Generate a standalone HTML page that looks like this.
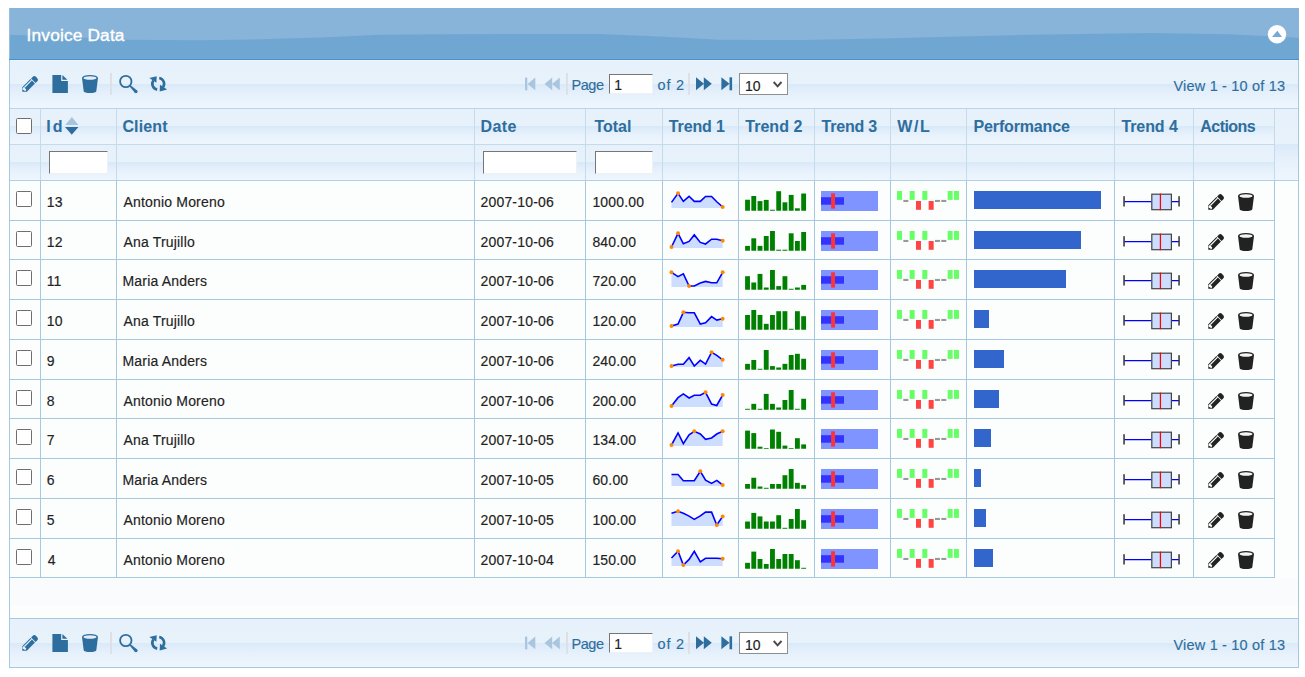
<!DOCTYPE html><html><head><meta charset="utf-8"><style>
*{box-sizing:border-box;margin:0;padding:0}
html,body{width:1305px;height:677px;background:#fff;overflow:hidden;font-family:"Liberation Sans", sans-serif;position:relative}
.a{position:absolute}
.t{position:absolute;white-space:nowrap;font-family:"Liberation Sans", sans-serif}
.glass{position:absolute;background:linear-gradient(to bottom,#e7f1fb 0%,#e8f2fb 50%,#d9e9f9 50%,#e0edfa 60%,#e8f2fc 76%,#eef6fd 100%)}
.l{position:absolute;background:#a6c9e2}
.lh{position:absolute;background:#c5dbec}
.cb{position:absolute;width:16px;height:16px;border:1px solid #6e6e6e;border-radius:1.5px;background:#fff}
.inp{position:absolute;background:#fff;border-top:1px solid #767676;border-left:1px solid #767676;border-right:1px solid #eef2f6;border-bottom:1px solid #eef2f6}
svg{position:absolute;overflow:visible}
</style></head><body>

<div class="a" style="left:9px;top:8px;width:1290px;height:660px;border:1px solid #a6c9e2;background:#fcfdfd"></div>
<div class="a" style="left:10px;top:579px;width:1288px;height:26px;background:#fafbfc"></div>
<div class="a" style="left:9px;top:8px;width:1290px;height:51px;background:#70a6d2;overflow:hidden"><svg style="left:0;top:0" width="1290" height="51"><defs><filter id="wb" x="-1%" y="-10%" width="102%" height="120%"><feGaussianBlur stdDeviation="0.7"/></filter></defs><path d="M0 0 H1290 V29.7 L1291.0 29.7 L1221.0 26.2 L1141.0 25.1 L1021.0 26.7 L951.0 28.4 L871.0 30.6 L791.0 32.0 L711.0 31.8 L651.0 28.6 L591.0 26.1 L491.0 26.1 L431.0 26.3 L371.0 26.8 L311.0 29.4 L241.0 31.6 L191.0 32.3 L120.0 31.8 L51.0 28.6 L0.0 26.7 Z" fill="#89b4d9" filter="url(#wb)"/></svg></div>
<div class="a" style="left:9px;top:8px;width:1px;height:51px;background:#98bddd"></div>
<div class="a" style="left:9px;top:59px;width:1290px;height:1px;background:#4592d6"></div>
<svg style="left:1268px;top:24.7px" width="18" height="18"><circle cx="9" cy="9.2" r="9.2" fill="#fff"/><path d="M4 11.9 L9.3 5.7 L14 11.9 Z" fill="#76a9d4"/></svg>
<div class="glass" style="left:10px;top:60px;width:1288px;height:48px"></div>
<svg style="left:22px;top:76px" width="16" height="16"><use href="#pencil" fill="#2e6e9e" color="#e8f2fb"/></svg>
<svg style="left:52px;top:75px" width="16" height="18"><path d="M0.4 0 H9.2 V6 H15.9 V17.9 H0.4 Z M10.4 0.1 L15.4 4.8 H10.4 Z" fill="#2e6e9e"/></svg>
<svg style="left:82px;top:75px" width="16" height="18"><use href="#trash" fill="#2e6e9e" color="#e3eefa"/></svg>
<div class="a" style="left:110px;top:73px;width:2px;height:22px;background:#dde0e6"></div>
<svg style="left:119px;top:75px" width="18" height="18"><circle cx="6.8" cy="6.5" r="5.7" fill="none" stroke="#2e6e9e" stroke-width="1.8"/><path d="M11.56 10.13 L18.12 15.46 L15.88 17.74 L10.44 11.27 Z" fill="#2e6e9e"/><circle cx="17" cy="16.6" r="1.6" fill="#2e6e9e"/></svg>
<svg style="left:145px;top:70px" width="26" height="26"><use href="#refresh" fill="#2e6e9e" stroke="#2e6e9e"/></svg>
<svg style="left:0;top:0px" width="1" height="1"><rect x="525" y="77.6" width="2.3" height="12.7" fill="#a9c6de"/><path d="M527.6 84 L535.3 77.6 V90.3 Z" fill="#a9c6de"/><path d="M544.5 84 L552.2 77.6 V90.3 Z M552.1 84 L559.8 77.6 V90.3 Z" fill="#a9c6de"/><path d="M696 77.3 L704 83.8 L696 90.3 Z M703.8 77.3 L711.8 83.8 L703.8 90.3 Z" fill="#2e6e9e"/><path d="M721.4 77.3 L729.5 83.8 L721.4 90.3 Z" fill="#2e6e9e"/><rect x="729.5" y="77.3" width="2.6" height="13" fill="#2e6e9e"/></svg>
<div class="a" style="left:566px;top:73px;width:2px;height:22px;background:#dde0e6"></div>
<div class="a" style="left:688px;top:73px;width:2px;height:22px;background:#dde0e6"></div>
<div class="inp" style="left:609px;top:74px;width:44px;height:20px"></div>
<div class="a" style="left:739px;top:73px;width:49px;height:22px;background:#fff;border:1px solid #8f8f8f"></div>
<svg style="left:773px;top:81px" width="10" height="8"><path d="M0.7 1 L4.6 5.4 L8.5 1" fill="none" stroke="#4a4a4a" stroke-width="1.9"/></svg>
<div class="a" style="left:10px;top:60px;width:1288px;height:1px;background:#eef5fc"></div>
<div class="a" style="left:10px;top:108px;width:1288px;height:1px;background:#bad4e8"></div>
<div class="glass" style="left:10px;top:109px;width:1265px;height:35px"></div>
<div class="glass" style="left:10px;top:145px;width:1265px;height:35px"></div>
<div class="glass" style="left:1275px;top:109px;width:23px;height:71px"></div>
<div class="lh" style="left:10px;top:144px;width:1265px;height:1px"></div>
<div class="lh" style="left:40px;top:109px;width:1px;height:71px"></div>
<div class="lh" style="left:116px;top:109px;width:1px;height:71px"></div>
<div class="lh" style="left:474px;top:109px;width:1px;height:71px"></div>
<div class="lh" style="left:585px;top:109px;width:1px;height:71px"></div>
<div class="lh" style="left:662px;top:109px;width:1px;height:71px"></div>
<div class="lh" style="left:738px;top:109px;width:1px;height:71px"></div>
<div class="lh" style="left:814px;top:109px;width:1px;height:71px"></div>
<div class="lh" style="left:890px;top:109px;width:1px;height:71px"></div>
<div class="lh" style="left:966px;top:109px;width:1px;height:71px"></div>
<div class="lh" style="left:1114px;top:109px;width:1px;height:71px"></div>
<div class="lh" style="left:1193px;top:109px;width:1px;height:71px"></div>
<div class="lh" style="left:1274px;top:109px;width:1px;height:71px"></div>
<div class="a" style="left:10px;top:180px;width:1288px;height:1px;background:#b3cfe5"></div>
<div class="cb" style="left:16px;top:118px"></div>
<svg style="left:65.3px;top:117px" width="14" height="18"><path d="M0.2 7.9 L6.85 0.1 L13.5 7.9 Z" fill="#a6c4dc"/><path d="M0 10 L13.5 10 L6.75 17.8 Z" fill="#2e6e9e"/></svg>
<div class="inp" style="left:49px;top:151px;width:59px;height:23px"></div>
<div class="inp" style="left:483px;top:151px;width:94px;height:23px"></div>
<div class="inp" style="left:595px;top:151px;width:58px;height:23px"></div>
<div class="l" style="left:10px;top:220px;width:1265px;height:1px"></div>
<div class="l" style="left:10px;top:259px;width:1265px;height:1px"></div>
<div class="l" style="left:10px;top:299px;width:1265px;height:1px"></div>
<div class="l" style="left:10px;top:339px;width:1265px;height:1px"></div>
<div class="l" style="left:10px;top:379px;width:1265px;height:1px"></div>
<div class="l" style="left:10px;top:418px;width:1265px;height:1px"></div>
<div class="l" style="left:10px;top:458px;width:1265px;height:1px"></div>
<div class="l" style="left:10px;top:498px;width:1265px;height:1px"></div>
<div class="l" style="left:10px;top:538px;width:1265px;height:1px"></div>
<div class="l" style="left:10px;top:577px;width:1265px;height:1px"></div>
<div class="l" style="left:40px;top:181px;width:1px;height:397px"></div>
<div class="l" style="left:116px;top:181px;width:1px;height:397px"></div>
<div class="l" style="left:474px;top:181px;width:1px;height:397px"></div>
<div class="l" style="left:585px;top:181px;width:1px;height:397px"></div>
<div class="l" style="left:662px;top:181px;width:1px;height:397px"></div>
<div class="l" style="left:738px;top:181px;width:1px;height:397px"></div>
<div class="l" style="left:814px;top:181px;width:1px;height:397px"></div>
<div class="l" style="left:890px;top:181px;width:1px;height:397px"></div>
<div class="l" style="left:966px;top:181px;width:1px;height:397px"></div>
<div class="l" style="left:1114px;top:181px;width:1px;height:397px"></div>
<div class="l" style="left:1193px;top:181px;width:1px;height:397px"></div>
<div class="l" style="left:1274px;top:181px;width:1px;height:397px"></div>
<div class="cb" style="left:16px;top:191px"></div>
<svg style="left:0;top:0" width="1" height="1"><path d="M671.49,208.00 L671.49,202.40 L678.04,193.30 L683.35,201.40 L689.09,196.30 L694.29,201.40 L700.30,201.40 L705.56,196.50 L711.57,196.50 L716.77,201.75 L722.67,207.00 L722.67,208.00 Z" fill="#ccddff"/><polyline points="671.49,202.40 678.04,193.30 683.35,201.40 689.09,196.30 694.29,201.40 700.30,201.40 705.56,196.50 711.57,196.50 716.77,201.75 722.67,207.00" fill="none" stroke="#0000ff" stroke-width="1.6" stroke-linejoin="miter"/><circle cx="678.04" cy="193.30" r="1.95" fill="#ff8800"/><circle cx="722.67" cy="207.00" r="1.95" fill="#ff8800"/></svg>
<svg style="left:0;top:0" width="1" height="1"><rect x="745.10" y="199.75" width="4.85" height="11.00" fill="#008000"/><rect x="751.34" y="196.00" width="4.85" height="14.75" fill="#008000"/><rect x="757.57" y="201.10" width="4.85" height="9.65" fill="#008000"/><rect x="763.81" y="199.90" width="4.85" height="10.85" fill="#008000"/><rect x="770.04" y="209.75" width="4.85" height="1.00" fill="#008000"/><rect x="776.27" y="191.20" width="4.85" height="19.55" fill="#008000"/><rect x="782.51" y="202.30" width="4.85" height="8.45" fill="#008000"/><rect x="788.75" y="194.90" width="4.85" height="15.85" fill="#008000"/><rect x="794.98" y="208.30" width="4.85" height="2.45" fill="#008000"/><rect x="801.22" y="193.50" width="4.85" height="17.25" fill="#008000"/></svg>
<svg style="left:0;top:0" width="1" height="1"><rect x="821" y="191" width="57" height="20" fill="#7f94ff"/><rect x="821" y="197.2" width="23" height="7.5" fill="#3333ff"/><rect x="831.1" y="193.3" width="3.9" height="15.3" fill="#ff3333"/></svg>
<svg style="left:0;top:0" width="1" height="1"><rect x="897.00" y="191.0" width="5" height="8.9" fill="#66ff66"/><rect x="903.33" y="199.9" width="5" height="2.1" fill="#999999"/><rect x="909.66" y="191.0" width="5" height="8.9" fill="#66ff66"/><rect x="915.99" y="201.0" width="5" height="8.8" fill="#ff4444"/><rect x="922.32" y="191.0" width="5" height="8.9" fill="#66ff66"/><rect x="928.65" y="201.0" width="5" height="8.8" fill="#ff4444"/><rect x="934.98" y="199.9" width="5" height="2.1" fill="#999999"/><rect x="941.31" y="199.9" width="5" height="2.1" fill="#999999"/><rect x="947.64" y="191.0" width="5" height="8.9" fill="#66ff66"/><rect x="953.97" y="191.0" width="5" height="8.9" fill="#66ff66"/></svg>
<div class="a" style="left:974px;top:191px;width:127.0px;height:17.5px;background:#3366cc"></div>
<svg style="left:0;top:0" width="1" height="1"><path d="M1124.2 201.60 H1151.5 M1172 201.60 H1179" stroke="#0000ff" stroke-width="1.25"/><rect x="1151.8" y="194.20" width="19.6" height="15.5" fill="#ccddff" stroke="#444" stroke-width="1.2"/><rect x="1159.8" y="193.60" width="1.25" height="16.6" fill="#ff0000"/><rect x="1123.3" y="196.20" width="1.5" height="10.3" fill="#333"/><rect x="1178.3" y="196.20" width="1.5" height="10.3" fill="#333"/></svg>
<svg style="left:1208px;top:194px" width="16" height="16"><use href="#pencil" fill="#222" color="#fcfdfd"/></svg>
<svg style="left:1238px;top:193px" width="16" height="18"><use href="#trash" fill="#222" color="#f4f4f4"/></svg>
<div class="cb" style="left:16px;top:231px"></div>
<svg style="left:0;top:0" width="1" height="1"><path d="M671.49,248.00 L671.49,247.00 L678.04,233.30 L683.35,243.80 L689.09,241.40 L694.29,234.90 L700.30,242.40 L705.56,244.00 L711.57,239.20 L716.77,239.20 L722.67,240.80 L722.67,248.00 Z" fill="#ccddff"/><polyline points="671.49,247.00 678.04,233.30 683.35,243.80 689.09,241.40 694.29,234.90 700.30,242.40 705.56,244.00 711.57,239.20 716.77,239.20 722.67,240.80" fill="none" stroke="#0000ff" stroke-width="1.6" stroke-linejoin="miter"/><circle cx="671.49" cy="247.00" r="1.95" fill="#ff8800"/><circle cx="678.04" cy="233.30" r="1.95" fill="#ff8800"/><circle cx="722.67" cy="240.80" r="1.95" fill="#ff8800"/></svg>
<svg style="left:0;top:0" width="1" height="1"><rect x="745.10" y="245.90" width="4.85" height="4.85" fill="#008000"/><rect x="751.34" y="238.30" width="4.85" height="12.45" fill="#008000"/><rect x="757.57" y="245.90" width="4.85" height="4.85" fill="#008000"/><rect x="763.81" y="236.00" width="4.85" height="14.75" fill="#008000"/><rect x="770.04" y="231.00" width="4.85" height="19.75" fill="#008000"/><rect x="776.27" y="249.70" width="4.85" height="1.05" fill="#008000"/><rect x="782.51" y="249.70" width="4.85" height="1.05" fill="#008000"/><rect x="788.75" y="233.30" width="4.85" height="17.45" fill="#008000"/><rect x="794.98" y="241.00" width="4.85" height="9.75" fill="#008000"/><rect x="801.22" y="232.00" width="4.85" height="18.75" fill="#008000"/></svg>
<svg style="left:0;top:0" width="1" height="1"><rect x="821" y="231" width="57" height="20" fill="#7f94ff"/><rect x="821" y="237.2" width="23" height="7.5" fill="#3333ff"/><rect x="831.1" y="233.3" width="3.9" height="15.3" fill="#ff3333"/></svg>
<svg style="left:0;top:0" width="1" height="1"><rect x="897.00" y="231.0" width="5" height="8.9" fill="#66ff66"/><rect x="903.33" y="239.9" width="5" height="2.1" fill="#999999"/><rect x="909.66" y="231.0" width="5" height="8.9" fill="#66ff66"/><rect x="915.99" y="241.0" width="5" height="8.8" fill="#ff4444"/><rect x="922.32" y="231.0" width="5" height="8.9" fill="#66ff66"/><rect x="928.65" y="241.0" width="5" height="8.8" fill="#ff4444"/><rect x="934.98" y="239.9" width="5" height="2.1" fill="#999999"/><rect x="941.31" y="239.9" width="5" height="2.1" fill="#999999"/><rect x="947.64" y="231.0" width="5" height="8.9" fill="#66ff66"/><rect x="953.97" y="231.0" width="5" height="8.9" fill="#66ff66"/></svg>
<div class="a" style="left:974px;top:231px;width:107.0px;height:17.5px;background:#3366cc"></div>
<svg style="left:0;top:0" width="1" height="1"><path d="M1124.2 241.60 H1151.5 M1172 241.60 H1179" stroke="#0000ff" stroke-width="1.25"/><rect x="1151.8" y="234.20" width="19.6" height="15.5" fill="#ccddff" stroke="#444" stroke-width="1.2"/><rect x="1159.8" y="233.60" width="1.25" height="16.6" fill="#ff0000"/><rect x="1123.3" y="236.20" width="1.5" height="10.3" fill="#333"/><rect x="1178.3" y="236.20" width="1.5" height="10.3" fill="#333"/></svg>
<svg style="left:1208px;top:234px" width="16" height="16"><use href="#pencil" fill="#222" color="#fcfdfd"/></svg>
<svg style="left:1238px;top:233px" width="16" height="18"><use href="#trash" fill="#222" color="#f4f4f4"/></svg>
<div class="cb" style="left:16px;top:270px"></div>
<svg style="left:0;top:0" width="1" height="1"><path d="M671.49,287.00 L671.49,272.30 L678.04,276.60 L683.35,273.90 L689.09,286.00 L694.29,286.00 L700.30,283.00 L705.56,281.40 L711.57,282.80 L716.77,282.80 L722.67,272.30 L722.67,287.00 Z" fill="#ccddff"/><polyline points="671.49,272.30 678.04,276.60 683.35,273.90 689.09,286.00 694.29,286.00 700.30,283.00 705.56,281.40 711.57,282.80 716.77,282.80 722.67,272.30" fill="none" stroke="#0000ff" stroke-width="1.6" stroke-linejoin="miter"/><circle cx="671.49" cy="272.30" r="1.95" fill="#ff8800"/><circle cx="689.09" cy="286.00" r="1.95" fill="#ff8800"/><circle cx="722.67" cy="272.30" r="1.95" fill="#ff8800"/></svg>
<svg style="left:0;top:0" width="1" height="1"><rect x="745.10" y="276.20" width="4.85" height="13.55" fill="#008000"/><rect x="751.34" y="282.50" width="4.85" height="7.25" fill="#008000"/><rect x="757.57" y="273.90" width="4.85" height="15.85" fill="#008000"/><rect x="763.81" y="287.50" width="4.85" height="2.25" fill="#008000"/><rect x="770.04" y="270.00" width="4.85" height="19.75" fill="#008000"/><rect x="776.27" y="286.10" width="4.85" height="3.65" fill="#008000"/><rect x="782.51" y="276.20" width="4.85" height="13.55" fill="#008000"/><rect x="788.75" y="288.80" width="4.85" height="0.95" fill="#008000"/><rect x="794.98" y="287.50" width="4.85" height="2.25" fill="#008000"/><rect x="801.22" y="284.90" width="4.85" height="4.85" fill="#008000"/></svg>
<svg style="left:0;top:0" width="1" height="1"><rect x="821" y="270" width="57" height="20" fill="#7f94ff"/><rect x="821" y="276.2" width="23" height="7.5" fill="#3333ff"/><rect x="831.1" y="272.3" width="3.9" height="15.3" fill="#ff3333"/></svg>
<svg style="left:0;top:0" width="1" height="1"><rect x="897.00" y="270.0" width="5" height="8.9" fill="#66ff66"/><rect x="903.33" y="278.9" width="5" height="2.1" fill="#999999"/><rect x="909.66" y="270.0" width="5" height="8.9" fill="#66ff66"/><rect x="915.99" y="280.0" width="5" height="8.8" fill="#ff4444"/><rect x="922.32" y="270.0" width="5" height="8.9" fill="#66ff66"/><rect x="928.65" y="280.0" width="5" height="8.8" fill="#ff4444"/><rect x="934.98" y="278.9" width="5" height="2.1" fill="#999999"/><rect x="941.31" y="278.9" width="5" height="2.1" fill="#999999"/><rect x="947.64" y="270.0" width="5" height="8.9" fill="#66ff66"/><rect x="953.97" y="270.0" width="5" height="8.9" fill="#66ff66"/></svg>
<div class="a" style="left:974px;top:270px;width:92.0px;height:17.5px;background:#3366cc"></div>
<svg style="left:0;top:0" width="1" height="1"><path d="M1124.2 280.60 H1151.5 M1172 280.60 H1179" stroke="#0000ff" stroke-width="1.25"/><rect x="1151.8" y="273.20" width="19.6" height="15.5" fill="#ccddff" stroke="#444" stroke-width="1.2"/><rect x="1159.8" y="272.60" width="1.25" height="16.6" fill="#ff0000"/><rect x="1123.3" y="275.20" width="1.5" height="10.3" fill="#333"/><rect x="1178.3" y="275.20" width="1.5" height="10.3" fill="#333"/></svg>
<svg style="left:1208px;top:273px" width="16" height="16"><use href="#pencil" fill="#222" color="#fcfdfd"/></svg>
<svg style="left:1238px;top:272px" width="16" height="18"><use href="#trash" fill="#222" color="#f4f4f4"/></svg>
<div class="cb" style="left:16px;top:310px"></div>
<svg style="left:0;top:0" width="1" height="1"><path d="M671.49,327.00 L671.49,326.00 L678.04,324.10 L683.35,312.30 L689.09,312.80 L694.29,312.80 L700.30,324.10 L705.56,322.80 L711.57,316.60 L716.77,320.10 L722.67,318.75 L722.67,327.00 Z" fill="#ccddff"/><polyline points="671.49,326.00 678.04,324.10 683.35,312.30 689.09,312.80 694.29,312.80 700.30,324.10 705.56,322.80 711.57,316.60 716.77,320.10 722.67,318.75" fill="none" stroke="#0000ff" stroke-width="1.6" stroke-linejoin="miter"/><circle cx="671.49" cy="326.00" r="1.95" fill="#ff8800"/><circle cx="683.35" cy="312.30" r="1.95" fill="#ff8800"/><circle cx="722.67" cy="318.75" r="1.95" fill="#ff8800"/></svg>
<svg style="left:0;top:0" width="1" height="1"><rect x="745.10" y="315.00" width="4.85" height="14.75" fill="#008000"/><rect x="751.34" y="310.00" width="4.85" height="19.75" fill="#008000"/><rect x="757.57" y="315.00" width="4.85" height="14.75" fill="#008000"/><rect x="763.81" y="323.85" width="4.85" height="5.90" fill="#008000"/><rect x="770.04" y="315.00" width="4.85" height="14.75" fill="#008000"/><rect x="776.27" y="311.20" width="4.85" height="18.55" fill="#008000"/><rect x="782.51" y="311.20" width="4.85" height="18.55" fill="#008000"/><rect x="788.75" y="328.80" width="4.85" height="0.95" fill="#008000"/><rect x="794.98" y="311.20" width="4.85" height="18.55" fill="#008000"/><rect x="801.22" y="316.20" width="4.85" height="13.55" fill="#008000"/></svg>
<svg style="left:0;top:0" width="1" height="1"><rect x="821" y="310" width="57" height="20" fill="#7f94ff"/><rect x="821" y="316.2" width="23" height="7.5" fill="#3333ff"/><rect x="831.1" y="312.3" width="3.9" height="15.3" fill="#ff3333"/></svg>
<svg style="left:0;top:0" width="1" height="1"><rect x="897.00" y="310.0" width="5" height="8.9" fill="#66ff66"/><rect x="903.33" y="318.9" width="5" height="2.1" fill="#999999"/><rect x="909.66" y="310.0" width="5" height="8.9" fill="#66ff66"/><rect x="915.99" y="320.0" width="5" height="8.8" fill="#ff4444"/><rect x="922.32" y="310.0" width="5" height="8.9" fill="#66ff66"/><rect x="928.65" y="320.0" width="5" height="8.8" fill="#ff4444"/><rect x="934.98" y="318.9" width="5" height="2.1" fill="#999999"/><rect x="941.31" y="318.9" width="5" height="2.1" fill="#999999"/><rect x="947.64" y="310.0" width="5" height="8.9" fill="#66ff66"/><rect x="953.97" y="310.0" width="5" height="8.9" fill="#66ff66"/></svg>
<div class="a" style="left:974px;top:310px;width:15.0px;height:17.5px;background:#3366cc"></div>
<svg style="left:0;top:0" width="1" height="1"><path d="M1124.2 320.60 H1151.5 M1172 320.60 H1179" stroke="#0000ff" stroke-width="1.25"/><rect x="1151.8" y="313.20" width="19.6" height="15.5" fill="#ccddff" stroke="#444" stroke-width="1.2"/><rect x="1159.8" y="312.60" width="1.25" height="16.6" fill="#ff0000"/><rect x="1123.3" y="315.20" width="1.5" height="10.3" fill="#333"/><rect x="1178.3" y="315.20" width="1.5" height="10.3" fill="#333"/></svg>
<svg style="left:1208px;top:313px" width="16" height="16"><use href="#pencil" fill="#222" color="#fcfdfd"/></svg>
<svg style="left:1238px;top:312px" width="16" height="18"><use href="#trash" fill="#222" color="#f4f4f4"/></svg>
<div class="cb" style="left:16px;top:350px"></div>
<svg style="left:0;top:0" width="1" height="1"><path d="M671.49,367.00 L671.49,366.00 L678.04,364.30 L683.35,364.30 L689.09,357.70 L694.29,366.00 L700.30,360.40 L705.56,364.10 L711.57,352.30 L716.77,355.30 L722.67,359.80 L722.67,367.00 Z" fill="#ccddff"/><polyline points="671.49,366.00 678.04,364.30 683.35,364.30 689.09,357.70 694.29,366.00 700.30,360.40 705.56,364.10 711.57,352.30 716.77,355.30 722.67,359.80" fill="none" stroke="#0000ff" stroke-width="1.6" stroke-linejoin="miter"/><circle cx="671.49" cy="366.00" r="1.95" fill="#ff8800"/><circle cx="711.57" cy="352.30" r="1.95" fill="#ff8800"/><circle cx="722.67" cy="359.80" r="1.95" fill="#ff8800"/></svg>
<svg style="left:0;top:0" width="1" height="1"><rect x="745.10" y="363.85" width="4.85" height="5.90" fill="#008000"/><rect x="751.34" y="360.00" width="4.85" height="9.75" fill="#008000"/><rect x="757.57" y="368.80" width="4.85" height="0.95" fill="#008000"/><rect x="763.81" y="350.00" width="4.85" height="19.75" fill="#008000"/><rect x="770.04" y="366.10" width="4.85" height="3.65" fill="#008000"/><rect x="776.27" y="367.50" width="4.85" height="2.25" fill="#008000"/><rect x="782.51" y="363.85" width="4.85" height="5.90" fill="#008000"/><rect x="788.75" y="355.00" width="4.85" height="14.75" fill="#008000"/><rect x="794.98" y="353.80" width="4.85" height="15.95" fill="#008000"/><rect x="801.22" y="358.75" width="4.85" height="11.00" fill="#008000"/></svg>
<svg style="left:0;top:0" width="1" height="1"><rect x="821" y="350" width="57" height="20" fill="#7f94ff"/><rect x="821" y="356.2" width="23" height="7.5" fill="#3333ff"/><rect x="831.1" y="352.3" width="3.9" height="15.3" fill="#ff3333"/></svg>
<svg style="left:0;top:0" width="1" height="1"><rect x="897.00" y="350.0" width="5" height="8.9" fill="#66ff66"/><rect x="903.33" y="358.9" width="5" height="2.1" fill="#999999"/><rect x="909.66" y="350.0" width="5" height="8.9" fill="#66ff66"/><rect x="915.99" y="360.0" width="5" height="8.8" fill="#ff4444"/><rect x="922.32" y="350.0" width="5" height="8.9" fill="#66ff66"/><rect x="928.65" y="360.0" width="5" height="8.8" fill="#ff4444"/><rect x="934.98" y="358.9" width="5" height="2.1" fill="#999999"/><rect x="941.31" y="358.9" width="5" height="2.1" fill="#999999"/><rect x="947.64" y="350.0" width="5" height="8.9" fill="#66ff66"/><rect x="953.97" y="350.0" width="5" height="8.9" fill="#66ff66"/></svg>
<div class="a" style="left:974px;top:350px;width:30.0px;height:17.5px;background:#3366cc"></div>
<svg style="left:0;top:0" width="1" height="1"><path d="M1124.2 360.60 H1151.5 M1172 360.60 H1179" stroke="#0000ff" stroke-width="1.25"/><rect x="1151.8" y="353.20" width="19.6" height="15.5" fill="#ccddff" stroke="#444" stroke-width="1.2"/><rect x="1159.8" y="352.60" width="1.25" height="16.6" fill="#ff0000"/><rect x="1123.3" y="355.20" width="1.5" height="10.3" fill="#333"/><rect x="1178.3" y="355.20" width="1.5" height="10.3" fill="#333"/></svg>
<svg style="left:1208px;top:353px" width="16" height="16"><use href="#pencil" fill="#222" color="#fcfdfd"/></svg>
<svg style="left:1238px;top:352px" width="16" height="18"><use href="#trash" fill="#222" color="#f4f4f4"/></svg>
<div class="cb" style="left:16px;top:390px"></div>
<svg style="left:0;top:0" width="1" height="1"><path d="M671.49,407.00 L671.49,406.00 L678.04,397.70 L683.35,393.90 L689.09,398.00 L694.29,395.30 L700.30,395.30 L705.56,392.30 L711.57,404.10 L716.77,405.50 L722.67,395.00 L722.67,407.00 Z" fill="#ccddff"/><polyline points="671.49,406.00 678.04,397.70 683.35,393.90 689.09,398.00 694.29,395.30 700.30,395.30 705.56,392.30 711.57,404.10 716.77,405.50 722.67,395.00" fill="none" stroke="#0000ff" stroke-width="1.6" stroke-linejoin="miter"/><circle cx="671.49" cy="406.00" r="1.95" fill="#ff8800"/><circle cx="705.56" cy="392.30" r="1.95" fill="#ff8800"/><circle cx="722.67" cy="395.00" r="1.95" fill="#ff8800"/></svg>
<svg style="left:0;top:0" width="1" height="1"><rect x="745.10" y="408.80" width="4.85" height="0.95" fill="#008000"/><rect x="751.34" y="403.85" width="4.85" height="5.90" fill="#008000"/><rect x="757.57" y="408.80" width="4.85" height="0.95" fill="#008000"/><rect x="763.81" y="393.90" width="4.85" height="15.85" fill="#008000"/><rect x="770.04" y="403.85" width="4.85" height="5.90" fill="#008000"/><rect x="776.27" y="407.50" width="4.85" height="2.25" fill="#008000"/><rect x="782.51" y="400.00" width="4.85" height="9.75" fill="#008000"/><rect x="788.75" y="390.00" width="4.85" height="19.75" fill="#008000"/><rect x="794.98" y="408.80" width="4.85" height="0.95" fill="#008000"/><rect x="801.22" y="398.75" width="4.85" height="11.00" fill="#008000"/></svg>
<svg style="left:0;top:0" width="1" height="1"><rect x="821" y="390" width="57" height="20" fill="#7f94ff"/><rect x="821" y="396.2" width="23" height="7.5" fill="#3333ff"/><rect x="831.1" y="392.3" width="3.9" height="15.3" fill="#ff3333"/></svg>
<svg style="left:0;top:0" width="1" height="1"><rect x="897.00" y="390.0" width="5" height="8.9" fill="#66ff66"/><rect x="903.33" y="398.9" width="5" height="2.1" fill="#999999"/><rect x="909.66" y="390.0" width="5" height="8.9" fill="#66ff66"/><rect x="915.99" y="400.0" width="5" height="8.8" fill="#ff4444"/><rect x="922.32" y="390.0" width="5" height="8.9" fill="#66ff66"/><rect x="928.65" y="400.0" width="5" height="8.8" fill="#ff4444"/><rect x="934.98" y="398.9" width="5" height="2.1" fill="#999999"/><rect x="941.31" y="398.9" width="5" height="2.1" fill="#999999"/><rect x="947.64" y="390.0" width="5" height="8.9" fill="#66ff66"/><rect x="953.97" y="390.0" width="5" height="8.9" fill="#66ff66"/></svg>
<div class="a" style="left:974px;top:390px;width:25.0px;height:17.5px;background:#3366cc"></div>
<svg style="left:0;top:0" width="1" height="1"><path d="M1124.2 400.60 H1151.5 M1172 400.60 H1179" stroke="#0000ff" stroke-width="1.25"/><rect x="1151.8" y="393.20" width="19.6" height="15.5" fill="#ccddff" stroke="#444" stroke-width="1.2"/><rect x="1159.8" y="392.60" width="1.25" height="16.6" fill="#ff0000"/><rect x="1123.3" y="395.20" width="1.5" height="10.3" fill="#333"/><rect x="1178.3" y="395.20" width="1.5" height="10.3" fill="#333"/></svg>
<svg style="left:1208px;top:393px" width="16" height="16"><use href="#pencil" fill="#222" color="#fcfdfd"/></svg>
<svg style="left:1238px;top:392px" width="16" height="18"><use href="#trash" fill="#222" color="#f4f4f4"/></svg>
<div class="cb" style="left:16px;top:429px"></div>
<svg style="left:0;top:0" width="1" height="1"><path d="M671.49,446.00 L671.49,445.00 L678.04,432.90 L683.35,443.65 L689.09,434.80 L694.29,431.30 L700.30,434.00 L705.56,439.40 L711.57,438.00 L716.77,434.00 L722.67,431.30 L722.67,446.00 Z" fill="#ccddff"/><polyline points="671.49,445.00 678.04,432.90 683.35,443.65 689.09,434.80 694.29,431.30 700.30,434.00 705.56,439.40 711.57,438.00 716.77,434.00 722.67,431.30" fill="none" stroke="#0000ff" stroke-width="1.6" stroke-linejoin="miter"/><circle cx="671.49" cy="445.00" r="1.95" fill="#ff8800"/><circle cx="694.29" cy="431.30" r="1.95" fill="#ff8800"/><circle cx="722.67" cy="431.30" r="1.95" fill="#ff8800"/></svg>
<svg style="left:0;top:0" width="1" height="1"><rect x="745.10" y="430.60" width="4.85" height="18.15" fill="#008000"/><rect x="751.34" y="433.10" width="4.85" height="15.65" fill="#008000"/><rect x="757.57" y="446.70" width="4.85" height="2.05" fill="#008000"/><rect x="763.81" y="448.00" width="4.85" height="0.75" fill="#008000"/><rect x="770.04" y="429.50" width="4.85" height="19.25" fill="#008000"/><rect x="776.27" y="431.80" width="4.85" height="16.95" fill="#008000"/><rect x="782.51" y="445.60" width="4.85" height="3.15" fill="#008000"/><rect x="788.75" y="448.00" width="4.85" height="0.75" fill="#008000"/><rect x="794.98" y="438.20" width="4.85" height="10.55" fill="#008000"/><rect x="801.22" y="444.40" width="4.85" height="4.35" fill="#008000"/></svg>
<svg style="left:0;top:0" width="1" height="1"><rect x="821" y="429" width="57" height="20" fill="#7f94ff"/><rect x="821" y="435.2" width="23" height="7.5" fill="#3333ff"/><rect x="831.1" y="431.3" width="3.9" height="15.3" fill="#ff3333"/></svg>
<svg style="left:0;top:0" width="1" height="1"><rect x="897.00" y="429.0" width="5" height="8.9" fill="#66ff66"/><rect x="903.33" y="437.9" width="5" height="2.1" fill="#999999"/><rect x="909.66" y="429.0" width="5" height="8.9" fill="#66ff66"/><rect x="915.99" y="439.0" width="5" height="8.8" fill="#ff4444"/><rect x="922.32" y="429.0" width="5" height="8.9" fill="#66ff66"/><rect x="928.65" y="439.0" width="5" height="8.8" fill="#ff4444"/><rect x="934.98" y="437.9" width="5" height="2.1" fill="#999999"/><rect x="941.31" y="437.9" width="5" height="2.1" fill="#999999"/><rect x="947.64" y="429.0" width="5" height="8.9" fill="#66ff66"/><rect x="953.97" y="429.0" width="5" height="8.9" fill="#66ff66"/></svg>
<div class="a" style="left:974px;top:429px;width:17.0px;height:17.5px;background:#3366cc"></div>
<svg style="left:0;top:0" width="1" height="1"><path d="M1124.2 439.60 H1151.5 M1172 439.60 H1179" stroke="#0000ff" stroke-width="1.25"/><rect x="1151.8" y="432.20" width="19.6" height="15.5" fill="#ccddff" stroke="#444" stroke-width="1.2"/><rect x="1159.8" y="431.60" width="1.25" height="16.6" fill="#ff0000"/><rect x="1123.3" y="434.20" width="1.5" height="10.3" fill="#333"/><rect x="1178.3" y="434.20" width="1.5" height="10.3" fill="#333"/></svg>
<svg style="left:1208px;top:432px" width="16" height="16"><use href="#pencil" fill="#222" color="#fcfdfd"/></svg>
<svg style="left:1238px;top:431px" width="16" height="18"><use href="#trash" fill="#222" color="#f4f4f4"/></svg>
<div class="cb" style="left:16px;top:469px"></div>
<svg style="left:0;top:0" width="1" height="1"><path d="M671.49,486.00 L671.49,474.50 L678.04,474.50 L683.35,480.70 L689.09,480.70 L694.29,480.70 L700.30,471.30 L705.56,480.20 L711.57,483.40 L716.77,480.40 L722.67,485.00 L722.67,486.00 Z" fill="#ccddff"/><polyline points="671.49,474.50 678.04,474.50 683.35,480.70 689.09,480.70 694.29,480.70 700.30,471.30 705.56,480.20 711.57,483.40 716.77,480.40 722.67,485.00" fill="none" stroke="#0000ff" stroke-width="1.6" stroke-linejoin="miter"/><circle cx="700.30" cy="471.30" r="1.95" fill="#ff8800"/><circle cx="722.67" cy="485.00" r="1.95" fill="#ff8800"/></svg>
<svg style="left:0;top:0" width="1" height="1"><rect x="745.10" y="484.00" width="4.85" height="4.75" fill="#008000"/><rect x="751.34" y="477.75" width="4.85" height="11.00" fill="#008000"/><rect x="757.57" y="486.50" width="4.85" height="2.25" fill="#008000"/><rect x="763.81" y="487.80" width="4.85" height="0.95" fill="#008000"/><rect x="770.04" y="484.00" width="4.85" height="4.75" fill="#008000"/><rect x="776.27" y="484.00" width="4.85" height="4.75" fill="#008000"/><rect x="782.51" y="475.20" width="4.85" height="13.55" fill="#008000"/><rect x="788.75" y="469.00" width="4.85" height="19.75" fill="#008000"/><rect x="794.98" y="482.85" width="4.85" height="5.90" fill="#008000"/><rect x="801.22" y="485.10" width="4.85" height="3.65" fill="#008000"/></svg>
<svg style="left:0;top:0" width="1" height="1"><rect x="821" y="469" width="57" height="20" fill="#7f94ff"/><rect x="821" y="475.2" width="23" height="7.5" fill="#3333ff"/><rect x="831.1" y="471.3" width="3.9" height="15.3" fill="#ff3333"/></svg>
<svg style="left:0;top:0" width="1" height="1"><rect x="897.00" y="469.0" width="5" height="8.9" fill="#66ff66"/><rect x="903.33" y="477.9" width="5" height="2.1" fill="#999999"/><rect x="909.66" y="469.0" width="5" height="8.9" fill="#66ff66"/><rect x="915.99" y="479.0" width="5" height="8.8" fill="#ff4444"/><rect x="922.32" y="469.0" width="5" height="8.9" fill="#66ff66"/><rect x="928.65" y="479.0" width="5" height="8.8" fill="#ff4444"/><rect x="934.98" y="477.9" width="5" height="2.1" fill="#999999"/><rect x="941.31" y="477.9" width="5" height="2.1" fill="#999999"/><rect x="947.64" y="469.0" width="5" height="8.9" fill="#66ff66"/><rect x="953.97" y="469.0" width="5" height="8.9" fill="#66ff66"/></svg>
<div class="a" style="left:974px;top:469px;width:7.2px;height:17.5px;background:#3366cc"></div>
<svg style="left:0;top:0" width="1" height="1"><path d="M1124.2 479.60 H1151.5 M1172 479.60 H1179" stroke="#0000ff" stroke-width="1.25"/><rect x="1151.8" y="472.20" width="19.6" height="15.5" fill="#ccddff" stroke="#444" stroke-width="1.2"/><rect x="1159.8" y="471.60" width="1.25" height="16.6" fill="#ff0000"/><rect x="1123.3" y="474.20" width="1.5" height="10.3" fill="#333"/><rect x="1178.3" y="474.20" width="1.5" height="10.3" fill="#333"/></svg>
<svg style="left:1208px;top:472px" width="16" height="16"><use href="#pencil" fill="#222" color="#fcfdfd"/></svg>
<svg style="left:1238px;top:471px" width="16" height="18"><use href="#trash" fill="#222" color="#f4f4f4"/></svg>
<div class="cb" style="left:16px;top:509px"></div>
<svg style="left:0;top:0" width="1" height="1"><path d="M671.49,526.00 L671.49,513.20 L678.04,511.30 L683.35,513.20 L689.09,516.10 L694.29,519.40 L700.30,515.90 L705.56,512.10 L711.57,512.10 L716.77,525.00 L722.67,516.40 L722.67,526.00 Z" fill="#ccddff"/><polyline points="671.49,513.20 678.04,511.30 683.35,513.20 689.09,516.10 694.29,519.40 700.30,515.90 705.56,512.10 711.57,512.10 716.77,525.00 722.67,516.40" fill="none" stroke="#0000ff" stroke-width="1.6" stroke-linejoin="miter"/><circle cx="678.04" cy="511.30" r="1.95" fill="#ff8800"/><circle cx="716.77" cy="525.00" r="1.95" fill="#ff8800"/><circle cx="722.67" cy="516.40" r="1.95" fill="#ff8800"/></svg>
<svg style="left:0;top:0" width="1" height="1"><rect x="745.10" y="521.50" width="4.85" height="7.25" fill="#008000"/><rect x="751.34" y="512.90" width="4.85" height="15.85" fill="#008000"/><rect x="757.57" y="516.40" width="4.85" height="12.35" fill="#008000"/><rect x="763.81" y="521.50" width="4.85" height="7.25" fill="#008000"/><rect x="770.04" y="521.50" width="4.85" height="7.25" fill="#008000"/><rect x="776.27" y="515.20" width="4.85" height="13.55" fill="#008000"/><rect x="782.51" y="527.80" width="4.85" height="0.95" fill="#008000"/><rect x="788.75" y="519.00" width="4.85" height="9.75" fill="#008000"/><rect x="794.98" y="509.00" width="4.85" height="19.75" fill="#008000"/><rect x="801.22" y="520.20" width="4.85" height="8.55" fill="#008000"/></svg>
<svg style="left:0;top:0" width="1" height="1"><rect x="821" y="509" width="57" height="20" fill="#7f94ff"/><rect x="821" y="515.2" width="23" height="7.5" fill="#3333ff"/><rect x="831.1" y="511.3" width="3.9" height="15.3" fill="#ff3333"/></svg>
<svg style="left:0;top:0" width="1" height="1"><rect x="897.00" y="509.0" width="5" height="8.9" fill="#66ff66"/><rect x="903.33" y="517.9" width="5" height="2.1" fill="#999999"/><rect x="909.66" y="509.0" width="5" height="8.9" fill="#66ff66"/><rect x="915.99" y="519.0" width="5" height="8.8" fill="#ff4444"/><rect x="922.32" y="509.0" width="5" height="8.9" fill="#66ff66"/><rect x="928.65" y="519.0" width="5" height="8.8" fill="#ff4444"/><rect x="934.98" y="517.9" width="5" height="2.1" fill="#999999"/><rect x="941.31" y="517.9" width="5" height="2.1" fill="#999999"/><rect x="947.64" y="509.0" width="5" height="8.9" fill="#66ff66"/><rect x="953.97" y="509.0" width="5" height="8.9" fill="#66ff66"/></svg>
<div class="a" style="left:974px;top:509px;width:12.2px;height:17.5px;background:#3366cc"></div>
<svg style="left:0;top:0" width="1" height="1"><path d="M1124.2 519.60 H1151.5 M1172 519.60 H1179" stroke="#0000ff" stroke-width="1.25"/><rect x="1151.8" y="512.20" width="19.6" height="15.5" fill="#ccddff" stroke="#444" stroke-width="1.2"/><rect x="1159.8" y="511.60" width="1.25" height="16.6" fill="#ff0000"/><rect x="1123.3" y="514.20" width="1.5" height="10.3" fill="#333"/><rect x="1178.3" y="514.20" width="1.5" height="10.3" fill="#333"/></svg>
<svg style="left:1208px;top:512px" width="16" height="16"><use href="#pencil" fill="#222" color="#fcfdfd"/></svg>
<svg style="left:1238px;top:511px" width="16" height="18"><use href="#trash" fill="#222" color="#f4f4f4"/></svg>
<div class="cb" style="left:16px;top:549px"></div>
<svg style="left:0;top:0" width="1" height="1"><path d="M671.49,566.00 L671.49,558.00 L678.04,551.30 L683.35,565.00 L689.09,559.40 L694.29,551.30 L700.30,561.80 L705.56,558.30 L711.57,558.30 L716.77,558.30 L722.67,558.80 L722.67,566.00 Z" fill="#ccddff"/><polyline points="671.49,558.00 678.04,551.30 683.35,565.00 689.09,559.40 694.29,551.30 700.30,561.80 705.56,558.30 711.57,558.30 716.77,558.30 722.67,558.80" fill="none" stroke="#0000ff" stroke-width="1.6" stroke-linejoin="miter"/><circle cx="678.04" cy="551.30" r="1.95" fill="#ff8800"/><circle cx="683.35" cy="565.00" r="1.95" fill="#ff8800"/><circle cx="722.67" cy="558.80" r="1.95" fill="#ff8800"/></svg>
<svg style="left:0;top:0" width="1" height="1"><rect x="745.10" y="562.85" width="4.85" height="5.90" fill="#008000"/><rect x="751.34" y="551.60" width="4.85" height="17.15" fill="#008000"/><rect x="757.57" y="559.00" width="4.85" height="9.75" fill="#008000"/><rect x="763.81" y="564.00" width="4.85" height="4.75" fill="#008000"/><rect x="770.04" y="549.00" width="4.85" height="19.75" fill="#008000"/><rect x="776.27" y="559.00" width="4.85" height="9.75" fill="#008000"/><rect x="782.51" y="554.00" width="4.85" height="14.75" fill="#008000"/><rect x="788.75" y="554.00" width="4.85" height="14.75" fill="#008000"/><rect x="794.98" y="560.20" width="4.85" height="8.55" fill="#008000"/><rect x="801.22" y="567.80" width="4.85" height="0.95" fill="#008000"/></svg>
<svg style="left:0;top:0" width="1" height="1"><rect x="821" y="549" width="57" height="20" fill="#7f94ff"/><rect x="821" y="555.2" width="23" height="7.5" fill="#3333ff"/><rect x="831.1" y="551.3" width="3.9" height="15.3" fill="#ff3333"/></svg>
<svg style="left:0;top:0" width="1" height="1"><rect x="897.00" y="549.0" width="5" height="8.9" fill="#66ff66"/><rect x="903.33" y="557.9" width="5" height="2.1" fill="#999999"/><rect x="909.66" y="549.0" width="5" height="8.9" fill="#66ff66"/><rect x="915.99" y="559.0" width="5" height="8.8" fill="#ff4444"/><rect x="922.32" y="549.0" width="5" height="8.9" fill="#66ff66"/><rect x="928.65" y="559.0" width="5" height="8.8" fill="#ff4444"/><rect x="934.98" y="557.9" width="5" height="2.1" fill="#999999"/><rect x="941.31" y="557.9" width="5" height="2.1" fill="#999999"/><rect x="947.64" y="549.0" width="5" height="8.9" fill="#66ff66"/><rect x="953.97" y="549.0" width="5" height="8.9" fill="#66ff66"/></svg>
<div class="a" style="left:974px;top:549px;width:19.0px;height:17.5px;background:#3366cc"></div>
<svg style="left:0;top:0" width="1" height="1"><path d="M1124.2 559.60 H1151.5 M1172 559.60 H1179" stroke="#0000ff" stroke-width="1.25"/><rect x="1151.8" y="552.20" width="19.6" height="15.5" fill="#ccddff" stroke="#444" stroke-width="1.2"/><rect x="1159.8" y="551.60" width="1.25" height="16.6" fill="#ff0000"/><rect x="1123.3" y="554.20" width="1.5" height="10.3" fill="#333"/><rect x="1178.3" y="554.20" width="1.5" height="10.3" fill="#333"/></svg>
<svg style="left:1208px;top:552px" width="16" height="16"><use href="#pencil" fill="#222" color="#fcfdfd"/></svg>
<svg style="left:1238px;top:551px" width="16" height="18"><use href="#trash" fill="#222" color="#f4f4f4"/></svg>
<div class="l" style="left:10px;top:618px;width:1288px;height:1px"></div>
<div class="glass" style="left:10px;top:619px;width:1288px;height:48px"></div>
<svg style="left:22px;top:635px" width="16" height="16"><use href="#pencil" fill="#2e6e9e" color="#e8f2fb"/></svg>
<svg style="left:52px;top:634px" width="16" height="18"><path d="M0.4 0 H9.2 V6 H15.9 V17.9 H0.4 Z M10.4 0.1 L15.4 4.8 H10.4 Z" fill="#2e6e9e"/></svg>
<svg style="left:82px;top:634px" width="16" height="18"><use href="#trash" fill="#2e6e9e" color="#e3eefa"/></svg>
<div class="a" style="left:110px;top:632px;width:2px;height:22px;background:#dde0e6"></div>
<svg style="left:119px;top:634px" width="18" height="18"><circle cx="6.8" cy="6.5" r="5.7" fill="none" stroke="#2e6e9e" stroke-width="1.8"/><path d="M11.56 10.13 L18.12 15.46 L15.88 17.74 L10.44 11.27 Z" fill="#2e6e9e"/><circle cx="17" cy="16.6" r="1.6" fill="#2e6e9e"/></svg>
<svg style="left:145px;top:629px" width="26" height="26"><use href="#refresh" fill="#2e6e9e" stroke="#2e6e9e"/></svg>
<svg style="left:0;top:559px" width="1" height="1"><rect x="525" y="77.6" width="2.3" height="12.7" fill="#a9c6de"/><path d="M527.6 84 L535.3 77.6 V90.3 Z" fill="#a9c6de"/><path d="M544.5 84 L552.2 77.6 V90.3 Z M552.1 84 L559.8 77.6 V90.3 Z" fill="#a9c6de"/><path d="M696 77.3 L704 83.8 L696 90.3 Z M703.8 77.3 L711.8 83.8 L703.8 90.3 Z" fill="#2e6e9e"/><path d="M721.4 77.3 L729.5 83.8 L721.4 90.3 Z" fill="#2e6e9e"/><rect x="729.5" y="77.3" width="2.6" height="13" fill="#2e6e9e"/></svg>
<div class="a" style="left:566px;top:632px;width:2px;height:22px;background:#dde0e6"></div>
<div class="a" style="left:688px;top:632px;width:2px;height:22px;background:#dde0e6"></div>
<div class="inp" style="left:609px;top:633px;width:44px;height:20px"></div>
<div class="a" style="left:739px;top:632px;width:49px;height:22px;background:#fff;border:1px solid #8f8f8f"></div>
<svg style="left:773px;top:640px" width="10" height="8"><path d="M0.7 1 L4.6 5.4 L8.5 1" fill="none" stroke="#4a4a4a" stroke-width="1.9"/></svg>
<div class="t" style="left:26.60px;top:26.56px;font-size:17.3px;line-height:17.3px;font-weight:normal;color:#fff;letter-spacing:0.164px;-webkit-text-stroke:0.35px #fff">Invoice Data</div>
<div class="t" style="left:571.50px;top:77.63px;font-size:14.5px;line-height:14.5px;font-weight:normal;color:#2e6e9e;letter-spacing:-0.467px;-webkit-text-stroke:0.15px #2e6e9e">Page</div>
<div class="t" style="left:657.60px;top:77.63px;font-size:14.5px;line-height:14.5px;font-weight:normal;color:#2e6e9e;letter-spacing:0.800px;-webkit-text-stroke:0.15px #2e6e9e">of 2</div>
<div class="t" style="left:1173.50px;top:78.63px;font-size:14.5px;line-height:14.5px;font-weight:normal;color:#2e6e9e;letter-spacing:0.188px;-webkit-text-stroke:0.15px #2e6e9e">View 1 - 10 of 13</div>
<div class="t" style="left:614.30px;top:78.15px;font-size:14px;line-height:14px;font-weight:normal;color:#222;letter-spacing:0.000px;-webkit-text-stroke:0.15px #222">1</div>
<div class="t" style="left:745.00px;top:78.85px;font-size:14px;line-height:14px;font-weight:normal;color:#222;letter-spacing:0.000px;-webkit-text-stroke:0.15px #222">10</div>
<div class="t" style="left:571.50px;top:636.63px;font-size:14.5px;line-height:14.5px;font-weight:normal;color:#2e6e9e;letter-spacing:-0.467px;-webkit-text-stroke:0.15px #2e6e9e">Page</div>
<div class="t" style="left:657.60px;top:636.63px;font-size:14.5px;line-height:14.5px;font-weight:normal;color:#2e6e9e;letter-spacing:0.800px;-webkit-text-stroke:0.15px #2e6e9e">of 2</div>
<div class="t" style="left:1173.50px;top:637.63px;font-size:14.5px;line-height:14.5px;font-weight:normal;color:#2e6e9e;letter-spacing:0.188px;-webkit-text-stroke:0.15px #2e6e9e">View 1 - 10 of 13</div>
<div class="t" style="left:614.30px;top:637.15px;font-size:14px;line-height:14px;font-weight:normal;color:#222;letter-spacing:0.000px;-webkit-text-stroke:0.15px #222">1</div>
<div class="t" style="left:745.00px;top:637.85px;font-size:14px;line-height:14px;font-weight:normal;color:#222;letter-spacing:0.000px;-webkit-text-stroke:0.15px #222">10</div>
<div class="t" style="left:46.30px;top:119.46px;font-size:16.0px;line-height:16.0px;font-weight:bold;color:#2e6e9e;letter-spacing:2.000px;-webkit-text-stroke:0.05px #2e6e9e">Id</div>
<div class="t" style="left:122.40px;top:119.46px;font-size:16.0px;line-height:16.0px;font-weight:bold;color:#2e6e9e;letter-spacing:0.140px;-webkit-text-stroke:0.05px #2e6e9e">Client</div>
<div class="t" style="left:480.40px;top:119.46px;font-size:16.0px;line-height:16.0px;font-weight:bold;color:#2e6e9e;letter-spacing:0.433px;-webkit-text-stroke:0.05px #2e6e9e">Date</div>
<div class="t" style="left:594.40px;top:119.46px;font-size:16.0px;line-height:16.0px;font-weight:bold;color:#2e6e9e;letter-spacing:-0.025px;-webkit-text-stroke:0.05px #2e6e9e">Total</div>
<div class="t" style="left:668.80px;top:119.46px;font-size:16.0px;line-height:16.0px;font-weight:bold;color:#2e6e9e;letter-spacing:-0.133px;-webkit-text-stroke:0.05px #2e6e9e">Trend 1</div>
<div class="t" style="left:745.20px;top:119.46px;font-size:16.0px;line-height:16.0px;font-weight:bold;color:#2e6e9e;letter-spacing:0.050px;-webkit-text-stroke:0.05px #2e6e9e">Trend 2</div>
<div class="t" style="left:821.60px;top:119.46px;font-size:16.0px;line-height:16.0px;font-weight:bold;color:#2e6e9e;letter-spacing:-0.217px;-webkit-text-stroke:0.05px #2e6e9e">Trend 3</div>
<div class="t" style="left:897.20px;top:119.46px;font-size:16.0px;line-height:16.0px;font-weight:bold;color:#2e6e9e;letter-spacing:1.600px;-webkit-text-stroke:0.05px #2e6e9e">W/L</div>
<div class="t" style="left:973.60px;top:119.46px;font-size:16.0px;line-height:16.0px;font-weight:bold;color:#2e6e9e;letter-spacing:-0.160px;-webkit-text-stroke:0.05px #2e6e9e">Performance</div>
<div class="t" style="left:1121.40px;top:119.46px;font-size:16.0px;line-height:16.0px;font-weight:bold;color:#2e6e9e;letter-spacing:-0.083px;-webkit-text-stroke:0.05px #2e6e9e">Trend 4</div>
<div class="t" style="left:1200.30px;top:119.46px;font-size:16.0px;line-height:16.0px;font-weight:bold;color:#2e6e9e;letter-spacing:-0.550px;-webkit-text-stroke:0.05px #2e6e9e">Actions</div>
<div class="t" style="left:46.70px;top:194.65px;font-size:14px;line-height:14px;font-weight:normal;color:#222;letter-spacing:0.180px;-webkit-text-stroke:0.15px #222">13</div>
<div class="t" style="left:123.50px;top:194.65px;font-size:14px;line-height:14px;font-weight:normal;color:#222;letter-spacing:0.180px;-webkit-text-stroke:0.15px #222">Antonio Moreno</div>
<div class="t" style="left:480.50px;top:194.65px;font-size:14px;line-height:14px;font-weight:normal;color:#222;letter-spacing:0.180px;-webkit-text-stroke:0.15px #222">2007-10-06</div>
<div class="t" style="left:592.40px;top:194.65px;font-size:14px;line-height:14px;font-weight:normal;color:#222;letter-spacing:0.180px;-webkit-text-stroke:0.15px #222">1000.00</div>
<div class="t" style="left:46.70px;top:234.65px;font-size:14px;line-height:14px;font-weight:normal;color:#222;letter-spacing:0.180px;-webkit-text-stroke:0.15px #222">12</div>
<div class="t" style="left:123.50px;top:234.65px;font-size:14px;line-height:14px;font-weight:normal;color:#222;letter-spacing:0.180px;-webkit-text-stroke:0.15px #222">Ana Trujillo</div>
<div class="t" style="left:480.50px;top:234.65px;font-size:14px;line-height:14px;font-weight:normal;color:#222;letter-spacing:0.180px;-webkit-text-stroke:0.15px #222">2007-10-06</div>
<div class="t" style="left:592.40px;top:234.65px;font-size:14px;line-height:14px;font-weight:normal;color:#222;letter-spacing:0.180px;-webkit-text-stroke:0.15px #222">840.00</div>
<div class="t" style="left:46.70px;top:273.65px;font-size:14px;line-height:14px;font-weight:normal;color:#222;letter-spacing:0.180px;-webkit-text-stroke:0.15px #222">11</div>
<div class="t" style="left:122.50px;top:273.65px;font-size:14px;line-height:14px;font-weight:normal;color:#222;letter-spacing:0.180px;-webkit-text-stroke:0.15px #222">Maria Anders</div>
<div class="t" style="left:480.50px;top:273.65px;font-size:14px;line-height:14px;font-weight:normal;color:#222;letter-spacing:0.180px;-webkit-text-stroke:0.15px #222">2007-10-06</div>
<div class="t" style="left:592.40px;top:273.65px;font-size:14px;line-height:14px;font-weight:normal;color:#222;letter-spacing:0.180px;-webkit-text-stroke:0.15px #222">720.00</div>
<div class="t" style="left:46.70px;top:313.65px;font-size:14px;line-height:14px;font-weight:normal;color:#222;letter-spacing:0.180px;-webkit-text-stroke:0.15px #222">10</div>
<div class="t" style="left:123.50px;top:313.65px;font-size:14px;line-height:14px;font-weight:normal;color:#222;letter-spacing:0.180px;-webkit-text-stroke:0.15px #222">Ana Trujillo</div>
<div class="t" style="left:480.50px;top:313.65px;font-size:14px;line-height:14px;font-weight:normal;color:#222;letter-spacing:0.180px;-webkit-text-stroke:0.15px #222">2007-10-06</div>
<div class="t" style="left:592.40px;top:313.65px;font-size:14px;line-height:14px;font-weight:normal;color:#222;letter-spacing:0.180px;-webkit-text-stroke:0.15px #222">120.00</div>
<div class="t" style="left:46.70px;top:353.65px;font-size:14px;line-height:14px;font-weight:normal;color:#222;letter-spacing:0.000px;-webkit-text-stroke:0.15px #222">9</div>
<div class="t" style="left:122.50px;top:353.65px;font-size:14px;line-height:14px;font-weight:normal;color:#222;letter-spacing:0.180px;-webkit-text-stroke:0.15px #222">Maria Anders</div>
<div class="t" style="left:480.50px;top:353.65px;font-size:14px;line-height:14px;font-weight:normal;color:#222;letter-spacing:0.180px;-webkit-text-stroke:0.15px #222">2007-10-06</div>
<div class="t" style="left:592.40px;top:353.65px;font-size:14px;line-height:14px;font-weight:normal;color:#222;letter-spacing:0.180px;-webkit-text-stroke:0.15px #222">240.00</div>
<div class="t" style="left:46.70px;top:393.65px;font-size:14px;line-height:14px;font-weight:normal;color:#222;letter-spacing:0.000px;-webkit-text-stroke:0.15px #222">8</div>
<div class="t" style="left:123.50px;top:393.65px;font-size:14px;line-height:14px;font-weight:normal;color:#222;letter-spacing:0.180px;-webkit-text-stroke:0.15px #222">Antonio Moreno</div>
<div class="t" style="left:480.50px;top:393.65px;font-size:14px;line-height:14px;font-weight:normal;color:#222;letter-spacing:0.180px;-webkit-text-stroke:0.15px #222">2007-10-06</div>
<div class="t" style="left:592.40px;top:393.65px;font-size:14px;line-height:14px;font-weight:normal;color:#222;letter-spacing:0.180px;-webkit-text-stroke:0.15px #222">200.00</div>
<div class="t" style="left:46.70px;top:432.65px;font-size:14px;line-height:14px;font-weight:normal;color:#222;letter-spacing:0.000px;-webkit-text-stroke:0.15px #222">7</div>
<div class="t" style="left:123.50px;top:432.65px;font-size:14px;line-height:14px;font-weight:normal;color:#222;letter-spacing:0.180px;-webkit-text-stroke:0.15px #222">Ana Trujillo</div>
<div class="t" style="left:480.50px;top:432.65px;font-size:14px;line-height:14px;font-weight:normal;color:#222;letter-spacing:0.180px;-webkit-text-stroke:0.15px #222">2007-10-05</div>
<div class="t" style="left:592.40px;top:432.65px;font-size:14px;line-height:14px;font-weight:normal;color:#222;letter-spacing:0.180px;-webkit-text-stroke:0.15px #222">134.00</div>
<div class="t" style="left:46.70px;top:472.65px;font-size:14px;line-height:14px;font-weight:normal;color:#222;letter-spacing:0.000px;-webkit-text-stroke:0.15px #222">6</div>
<div class="t" style="left:122.50px;top:472.65px;font-size:14px;line-height:14px;font-weight:normal;color:#222;letter-spacing:0.180px;-webkit-text-stroke:0.15px #222">Maria Anders</div>
<div class="t" style="left:480.50px;top:472.65px;font-size:14px;line-height:14px;font-weight:normal;color:#222;letter-spacing:0.180px;-webkit-text-stroke:0.15px #222">2007-10-05</div>
<div class="t" style="left:592.40px;top:472.65px;font-size:14px;line-height:14px;font-weight:normal;color:#222;letter-spacing:0.180px;-webkit-text-stroke:0.15px #222">60.00</div>
<div class="t" style="left:46.70px;top:512.65px;font-size:14px;line-height:14px;font-weight:normal;color:#222;letter-spacing:0.000px;-webkit-text-stroke:0.15px #222">5</div>
<div class="t" style="left:123.50px;top:512.65px;font-size:14px;line-height:14px;font-weight:normal;color:#222;letter-spacing:0.180px;-webkit-text-stroke:0.15px #222">Antonio Moreno</div>
<div class="t" style="left:480.50px;top:512.65px;font-size:14px;line-height:14px;font-weight:normal;color:#222;letter-spacing:0.180px;-webkit-text-stroke:0.15px #222">2007-10-05</div>
<div class="t" style="left:592.40px;top:512.65px;font-size:14px;line-height:14px;font-weight:normal;color:#222;letter-spacing:0.180px;-webkit-text-stroke:0.15px #222">100.00</div>
<div class="t" style="left:47.70px;top:552.65px;font-size:14px;line-height:14px;font-weight:normal;color:#222;letter-spacing:0.000px;-webkit-text-stroke:0.15px #222">4</div>
<div class="t" style="left:123.50px;top:552.65px;font-size:14px;line-height:14px;font-weight:normal;color:#222;letter-spacing:0.180px;-webkit-text-stroke:0.15px #222">Antonio Moreno</div>
<div class="t" style="left:480.50px;top:552.65px;font-size:14px;line-height:14px;font-weight:normal;color:#222;letter-spacing:0.180px;-webkit-text-stroke:0.15px #222">2007-10-04</div>
<div class="t" style="left:592.40px;top:552.65px;font-size:14px;line-height:14px;font-weight:normal;color:#222;letter-spacing:0.180px;-webkit-text-stroke:0.15px #222">150.00</div>
<svg width="0" height="0" style="position:absolute;left:0;top:0"><defs>
<g id="pencil">
 <g transform="translate(0.3,15.7) rotate(-45)">
  <path d="M0 0 L3.2 -3.2 H14.7 V3.2 H3.2 Z"/>
  <path d="M15.6 -3.2 H18.1 A2.1 3.2 0 0 1 18.1 3.2 H15.6 Z"/>
  <rect x="4.4" y="-2.1" width="10.3" height="1.1" fill="currentColor"/>
  <path d="M1.7 -1.3 L2.9 -2.3 L4.3 -2.3 L4.3 1.3 L2.6 1.9 Z" fill="currentColor"/>
 </g>
</g>
<g id="trash">
 <path d="M0 2.9 A8 2.9 0 0 1 16 2.9 L14.3 16.2 A6.3 1.8 0 0 1 1.7 16.2 Z"/>
 <ellipse cx="8" cy="3.1" rx="6.5" ry="1.75" fill="currentColor"/>
</g>
<g id="refresh">
 <g transform="translate(-145,-70)">
 <path d="M157.18 89.61 A5.9 5.9 0 0 1 153.37 80.42" fill="none" stroke-width="2.6"/>
 <path d="M149.3 78 L156.7 76.2 L156.4 82.8 Z" stroke="none"/>
 <path d="M159.22 77.99 A5.9 5.9 0 0 1 163.03 87.18" fill="none" stroke-width="2.6"/>
 <path d="M167.1 89.6 L159.7 91.4 L160 84.8 Z" stroke="none"/>
 </g>
</g>
</defs></svg>
</body></html>
